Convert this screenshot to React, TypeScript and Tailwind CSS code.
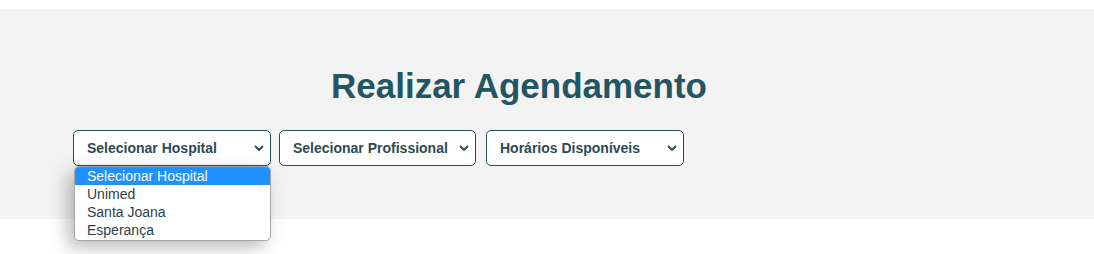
import React from "react";

const Chevron = () => (
  <svg width="10" height="7" viewBox="0 0 10 7" className="shrink-0">
    <path d="M1.5 1.5 L5 5 L8.5 1.5" fill="none" stroke="#2b4a55" strokeWidth="1.8" strokeLinecap="round" strokeLinejoin="round" />
  </svg>
);

const Sel = ({ label, w }: { label: string; w: string }) => (
  <div className={`${w} h-[36px] border border-[#24505c] rounded-[5px] bg-white flex items-center justify-between pl-[13px] pr-[6px] text-[14px] font-bold text-[#2b4a55]`}>
    <span>{label}</span>
    <Chevron />
  </div>
);

export default function App() {
  return (
    <div className="w-[1094px] h-[254px] bg-white" style={{ fontFamily: '"Liberation Sans", Arial, sans-serif' }}>
      <div className="h-[9px]" />
      <div className="h-[210px] bg-[#f3f3f3] pl-[73px] pr-[129px] pt-[57px]">
        <h1 className="text-center text-[35px] leading-[40px] font-bold text-[#245562]">Realizar Agendamento</h1>
        <div className="flex mt-[24px]">
          <div className="relative">
            <Sel label="Selecionar Hospital" w="w-[198px]" />
            <div className="absolute left-[1px] top-[36px] w-[197px] bg-white rounded-[5px] border border-[#a8a8a8] shadow-[-6px_6px_18px_rgba(0,0,0,0.28)] text-[14px] leading-[18px] text-[#2f3e4a] overflow-hidden z-10">
              <div className="bg-[#1e90ff] text-white pl-[12px]">Selecionar Hospital</div>
              <div className="pl-[12px]">Unimed</div>
              <div className="pl-[12px]">Santa Joana</div>
              <div className="pl-[12px] pb-[1px]">Esperança</div>
            </div>
          </div>
          <div className="ml-[8px]"><Sel label="Selecionar Profissional" w="w-[197px]" /></div>
          <div className="ml-[10px]"><Sel label="Horários Disponíveis" w="w-[198px]" /></div>
        </div>
      </div>
    </div>
  );
}
